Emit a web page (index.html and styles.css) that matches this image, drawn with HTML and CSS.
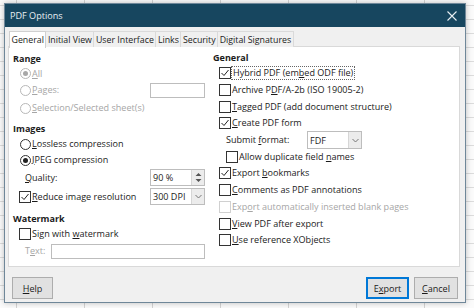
FILE: index.html
```html
<!DOCTYPE html>
<html>
<head>
<meta charset="utf-8">
<link rel="stylesheet" href="styles.css">
</head>
<body>
<div class="dialog">
  <div class="titlebar">
    <span class="title">PDF Options</span>
    <svg class="close" width="12" height="12" viewBox="0 0 12 12"><path d="M1.5 1.5L10.5 10.5M10.5 1.5L1.5 10.5" stroke="#e8eef2" stroke-width="1.1" fill="none"/></svg>
  </div>
  <div class="tabs">
    <div class="tab active">General</div>
    <div class="tab">Initial View</div>
    <div class="tab">User Interface</div>
    <div class="tab">Links</div>
    <div class="tab">Security</div>
    <div class="tab">Digital Signatures</div>
  </div>
  <div class="panel">
    <div class="col col-left">
      <div class="heading">Range</div>
      <div class="row h15"><span class="radio dis on ind7"></span><span class="lbl dis"><u>A</u>ll</span></div>
      <div class="row h18"><span class="radio dis ind7"></span><span class="lbl dis"><u>P</u>ages:</span><span class="field edit w55"></span></div>
      <div class="row h18"><span class="radio dis ind7"></span><span class="lbl dis"><u>S</u>election/Selected sheet(s)</span></div>
      <div class="heading mt3">Images</div>
      <div class="row h16"><span class="radio ind7"></span><span class="lbl"><u>L</u>ossless compression</span></div>
      <div class="row h16"><span class="radio on ind7"></span><span class="lbl"><u>J</u>PEG compression</span></div>
      <div class="row h19">
        <span class="lbl ind12"><u>Q</u>uality:</span>
        <span class="field spin w55"><span class="val">90 %</span><span class="spinbtn"><svg width="7" height="11" viewBox="0 0 7 11"><path d="M0.5 4L3.5 1L6.5 4Z M0.5 7L3.5 10L6.5 7Z" fill="#555"/></svg></span></span>
      </div>
      <div class="row h19">
        <span class="cb on ind6"><svg width="10" height="10" viewBox="0 0 10 10"><path d="M1.5 5L4 7.5L8.5 2" fill="none" stroke="#222" stroke-width="1"/></svg></span>
        <span class="lbl"><u>R</u>educe image resolution</span>
        <span class="field combo w55"><span class="val">300 DPI</span><span class="dropbtn"><svg width="7" height="5" viewBox="0 0 7 5"><path d="M0.5 1L3.5 4L6.5 1" fill="none" stroke="#777" stroke-width="1"/></svg></span></span>
      </div>
      <div class="heading mt4">Watermark</div>
      <div class="row h16"><span class="cb ind6"></span><span class="lbl">Sign with <u>w</u>atermark</span></div>
      <div class="row h18"><span class="lbl dis ind12">T<u>e</u>xt:</span><span class="field edit w154"></span></div>
    </div>
    <div class="col col-right">
      <div class="heading h15">General</div>
      <div class="row r"><span class="cb on ind6"><svg width="10" height="10" viewBox="0 0 10 10"><path d="M1.5 5L4 7.5L8.5 2" fill="none" stroke="#222" stroke-width="1"/></svg></span><span class="lbl focus">Hybrid PDF (em<u>b</u>ed ODF file)</span></div>
      <div class="row r"><span class="cb ind6"></span><span class="lbl">Archive P<u>D</u>F/A-2b (ISO 19005-2)</span></div>
      <div class="row r"><span class="cb ind6"></span><span class="lbl"><u>T</u>agged PDF (add document structure)</span></div>
      <div class="row r"><span class="cb on ind6"><svg width="10" height="10" viewBox="0 0 10 10"><path d="M1.5 5L4 7.5L8.5 2" fill="none" stroke="#222" stroke-width="1"/></svg></span><span class="lbl"><u>C</u>reate PDF form</span></div>
      <div class="row r">
        <span class="lbl ind13 w81">Submit <u>f</u>ormat:</span>
        <span class="field combo w55 tall"><span class="val">FDF</span><span class="dropbtn"><svg width="7" height="5" viewBox="0 0 7 5"><path d="M0.5 1L3.5 4L6.5 1" fill="none" stroke="#777" stroke-width="1"/></svg></span></span>
      </div>
      <div class="row r"><span class="cb ind13"></span><span class="lbl">Allow duplicate field <u>n</u>ames</span></div>
      <div class="row r"><span class="cb on ind6"><svg width="10" height="10" viewBox="0 0 10 10"><path d="M1.5 5L4 7.5L8.5 2" fill="none" stroke="#222" stroke-width="1"/></svg></span><span class="lbl">Export <u>b</u>ookmarks</span></div>
      <div class="row r"><span class="cb ind6"></span><span class="lbl"><u>C</u>omments as PDF annotations</span></div>
      <div class="row r"><span class="cb dis ind6"></span><span class="lbl dis">Exp<u>o</u>rt automatically inserted blank pages</span></div>
      <div class="row r"><span class="cb ind6"></span><span class="lbl"><u>V</u>iew PDF after export</span></div>
      <div class="row r"><span class="cb ind6"></span><span class="lbl"><u>U</u>se reference XObjects</span></div>
    </div>
  </div>
  <div class="buttons">
    <button class="btn w41"><u>H</u>elp</button>
    <span class="spacer"></span>
    <button class="btn default w43">E<u>x</u>port</button>
    <button class="btn w44"><u>C</u>ancel</button>
  </div>
</div>
</body>
</html>
```

FILE: styles.css
```css
html, body {
  margin: 0;
  padding: 0;
}
body {
  width: 474px;
  height: 308px;
  overflow: hidden;
  position: relative;
  background-color: #fbfbfb;
  background-image:
    linear-gradient(to right, #d4d4d4 1px, transparent 1px),
    linear-gradient(to bottom, #dcdcdc 1px, transparent 1px);
  background-size: 68px 100%, 100% 14px;
  background-position: 16px 0, 0 5px;
  font-family: "Open Sans", "Noto Sans", sans-serif;
  font-size: 9.05px;
  color: #1b1b1b;
}
.dialog {
  position: absolute;
  left: 4px;
  top: 3px;
  width: 460px;
  height: 298px;
  border: 1px solid #6f8799;
  background: #f0f0f0;
  box-shadow: 0 0 6px rgba(0,0,0,0.25);
  display: flex;
  flex-direction: column;
}
.titlebar {
  height: 23px;
  background: #17465f;
  display: flex;
  align-items: center;
  padding: 0 7px 0 5px;
}
.title {
  color: #e9eff3;
  font-size: 9.1px;
  flex: 1;
}
.close {
  display: block;
}
.tabs {
  display: flex;
  margin: 4px 0 -1px 4px;
  height: 16px;
  position: relative;
  z-index: 1;
  font-size: 8.8px;
}
.tab {
  height: 15px;
  padding: 0 1.5px;
  display: flex;
  align-items: center;
  border: 1px solid #dadada;
  border-bottom: none;
  margin-left: -1px;
  background: #f0f0f0;
  color: #1b1b1b;
  white-space: nowrap;
}
.tab:first-child { margin-left: 0; }
.tab.active {
  background: #fff;
  height: 16px;
  border-color: #d0d0d0;
  position: relative;
  z-index: 2;
}
.panel {
  margin: 0 5px 0 3px;
  height: 216px;
  background: #fff;
  border: 1px solid #d9d9d9;
  padding: 3px 0 0 4px;
  display: flex;
  gap: 8px;
}
.col {
  display: flex;
  flex-direction: column;
}
.col-left { width: 192px; }
.col-right { flex: 1; }
.heading {
  font-weight: bold;
  height: 16px;
  display: flex;
  align-items: center;
}
.heading.h15 { height: 15px; }
.mt3 { margin-top: 3px; }
.mt4 { margin-top: 4px; }
.row {
  display: flex;
  align-items: center;
  white-space: nowrap;
}
.h15 { height: 15px; }
.h16 { height: 16px; }
.h18 { height: 18px; }
.h19 { height: 19px; }
.r { height: 16.7px; }
.ind6 { margin-left: 6px; }
.ind7 { margin-left: 7px; }
.w81 { width: 81px; flex: none; }
.lbl {
  margin-left: 1px;
  line-height: 12px;
}
.lbl.ind12 { margin-left: 12px; }
.lbl.ind13 { margin-left: 13px; }
.cb.ind13 { margin-left: 13px; }
.lbl.dis, .dis { color: #a6a6a6; }
.lbl u { text-decoration-thickness: 1px; text-underline-offset: 1px; }
.lbl.focus {
  outline: 1px dotted #666;
  outline-offset: 0;
  padding: 0 1px;
}
.radio {
  width: 9px;
  height: 9px;
  border: 1px solid #333;
  border-radius: 50%;
  background: #fff;
  position: relative;
  flex: none;
}
.radio.on::after {
  content: "";
  position: absolute;
  left: 2px;
  top: 2px;
  width: 5px;
  height: 5px;
  border-radius: 50%;
  background: #222;
}
.radio.dis { border-color: #b8b8b8; }
.radio.dis.on::after { background: #a8a8a8; }
.cb {
  width: 10px;
  height: 10px;
  border: 1px solid #333;
  background: #fff;
  flex: none;
  display: flex;
}
.cb.dis { border-color: #d0d0d0; }
.cb svg { display: block; }
.field {
  margin-left: auto;
  background: #fff;
  border: 1px solid #bdbdbd;
  display: flex;
  align-items: center;
  box-sizing: border-box;
  flex: none;
}
.field.edit { height: 15px; }
.field.spin, .field.combo { height: 17px; }
.field.tall { height: 18px; margin-left: 0; }
.w55 { width: 55px; }
.w154 { width: 154px; }
.val {
  flex: 1;
  padding-left: 2px;
  white-space: nowrap;
  overflow: hidden;
}
.spinbtn, .dropbtn {
  width: 12px;
  height: 100%;
  background: #ececec;
  border-left: 1px solid #d6d6d6;
  display: flex;
  align-items: center;
  justify-content: center;
  flex: none;
}
.buttons {
  display: flex;
  gap: 5px;
  margin: 10px 7px 0 7px;
  height: 22px;
}
.spacer { flex: 1; }
.btn {
  font-family: inherit;
  font-size: 9.05px;
  color: #1b1b1b;
  background: #e1e1e1;
  border: 1px solid #adadad;
  padding: 0;
  height: 22px;
  margin: 0;
}
.btn.default {
  border: 1px solid #0078d7;
  box-shadow: inset 0 0 0 1px #0078d7;
}
.w41 { width: 41px; }
.w43 { width: 43px; }
.w44 { width: 44px; }
```
